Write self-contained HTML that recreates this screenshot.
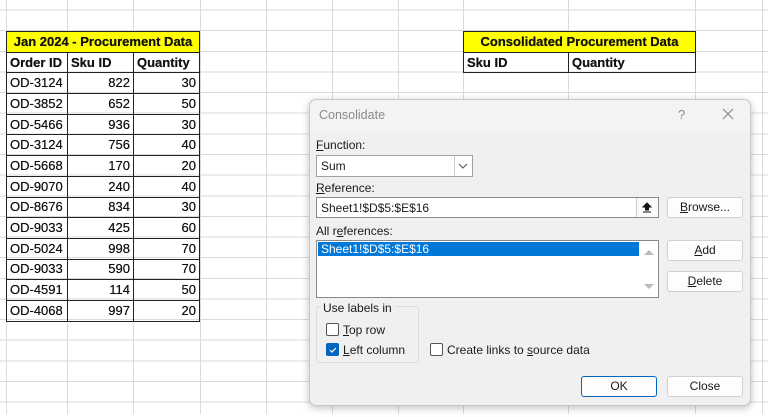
<!DOCTYPE html>
<html><head><meta charset="utf-8"><style>
*{box-sizing:border-box;margin:0;padding:0}
body{width:768px;height:417px;overflow:hidden;background:#fff;font-family:"Liberation Sans",sans-serif;position:relative}
.grid{position:absolute;left:0;top:0;width:768px;height:414px;background:repeating-linear-gradient(to bottom,transparent 0,transparent 9.6px,#dadada 9.6px,#dadada 10.6px,transparent 10.6px,transparent 20.63px)}
.v{position:absolute;top:0;height:414px;width:1px;background:#dadada}
.t{position:absolute;border-collapse:collapse;font-size:13px;color:#111;text-shadow:0 0 0.4px #000}
.t td{border:1px solid #222;height:20.7px;padding:0 3px;white-space:nowrap;line-height:18px}
.t td.r{text-align:right}
.t .h td{font-weight:bold}
.y{background:#ffff00;font-weight:bold;text-align:center}
.dlg{position:absolute;left:309px;top:99px;width:442px;height:307px;background:#f0f0f0;border:1px solid #c8c8c8;border-radius:7px;box-shadow:0 2px 8px rgba(0,0,0,.25);font-size:12px;color:#1a1a1a}
.a{position:absolute}
.u{text-decoration:underline}
.box{position:absolute;background:#fff;border:1px solid #8a8a8a}
.btn{position:absolute;width:76px;height:21px;background:#fdfdfd;border:1px solid #d0d0d0;border-radius:3px;text-align:center;line-height:19px;font-size:12px}
.cb{position:absolute;width:13px;height:13px;border:1px solid #555;border-radius:2px;background:#fff}
</style></head><body>
<div class="grid"></div>
<div class="v" style="left:6px"></div><div class="v" style="left:67px"></div><div class="v" style="left:133px"></div><div class="v" style="left:200px"></div><div class="v" style="left:266px"></div><div class="v" style="left:332px"></div><div class="v" style="left:398px"></div><div class="v" style="left:463px"></div><div class="v" style="left:568px"></div><div class="v" style="left:695px"></div><div class="v" style="left:762px"></div>

<table class="t" style="left:6px;top:31px;width:194px">
<tr><td colspan="3" class="y">Jan 2024 - Procurement Data</td></tr>
<tr class="h"><td style="width:61px">Order ID</td><td style="width:66px">Sku ID</td><td>Quantity</td></tr>
<tr><td>OD-3124</td><td class="r">822</td><td class="r">30</td></tr>
<tr><td>OD-3852</td><td class="r">652</td><td class="r">50</td></tr>
<tr><td>OD-5466</td><td class="r">936</td><td class="r">30</td></tr>
<tr><td>OD-3124</td><td class="r">756</td><td class="r">40</td></tr>
<tr><td>OD-5668</td><td class="r">170</td><td class="r">20</td></tr>
<tr><td>OD-9070</td><td class="r">240</td><td class="r">40</td></tr>
<tr><td>OD-8676</td><td class="r">834</td><td class="r">30</td></tr>
<tr><td>OD-9033</td><td class="r">425</td><td class="r">60</td></tr>
<tr><td>OD-5024</td><td class="r">998</td><td class="r">70</td></tr>
<tr><td>OD-9033</td><td class="r">590</td><td class="r">70</td></tr>
<tr><td>OD-4591</td><td class="r">114</td><td class="r">50</td></tr>
<tr><td>OD-4068</td><td class="r">997</td><td class="r">20</td></tr>
</table>

<table class="t" style="left:463px;top:31px;width:233px">
<tr><td colspan="2" class="y">Consolidated Procurement Data</td></tr>
<tr class="h"><td style="width:105px">Sku ID</td><td>Quantity</td></tr>
</table>

<div class="dlg">
<div class="a" style="left:0;top:0;width:440px;height:32px;background:#f3f3f3;border-radius:7px 7px 0 0"></div>
<div class="a" style="left:9px;top:8px;font-size:12.5px;color:#8a8a8a">Consolidate</div>
<div class="a" style="left:368px;top:7px;font-size:13px;color:#888">?</div>
<svg class="a" style="left:412px;top:8px" width="12" height="12"><path d="M1 1L11 11M11 1L1 11" stroke="#888" stroke-width="1.2"/></svg>
<div class="a" style="left:6px;top:38px"><span class="u">F</span>unction:</div>
<div class="box" style="left:6px;top:55px;width:157px;height:22px;border-color:#a0a0a0"><span style="position:absolute;left:4px;top:3px">Sum</span><div style="position:absolute;right:0;top:0;width:18px;height:20px;border-left:1px solid #ccc"></div><svg style="position:absolute;right:4px;top:7px" width="10" height="6"><path d="M1 1L5 5L9 1" stroke="#555" fill="none"/></svg></div>
<div class="a" style="left:6px;top:81px"><span class="u">R</span>eference:</div>
<div class="box" style="left:6px;top:97px;width:343px;height:21px"><span style="position:absolute;left:4px;top:3px">Sheet1!$D$5:$E$16</span><div style="position:absolute;right:0;top:0;width:22px;height:19px;border-left:1px solid #ccc;background:#fafafa"></div><svg style="position:absolute;right:6px;top:4px" width="10" height="11"><path d="M5 1L1 5H3.5V8H6.5V5H9Z M1 10H9" fill="#111" stroke="#111" stroke-width="1"/></svg></div>
<div class="btn" style="left:357px;top:97px"><span class="u">B</span>rowse...</div>
<div class="a" style="left:6px;top:124px">All r<span class="u">e</span>ferences:</div>
<div class="box" style="left:6px;top:140px;width:343px;height:58px"><div style="position:absolute;left:1px;top:1px;width:321px;height:14px;background:#0078d7;color:#fff;line-height:14px;padding-left:3px">Sheet1!$D$5:$E$16</div><svg style="position:absolute;right:4px;top:8px" width="10" height="6"><path d="M0 6L5 1L10 6Z" fill="#bbb"/></svg><svg style="position:absolute;right:4px;top:43px" width="10" height="6"><path d="M0 0L5 5L10 0Z" fill="#bbb"/></svg></div>
<div class="btn" style="left:357px;top:140px"><span class="u">A</span>dd</div>
<div class="btn" style="left:357px;top:171px"><span class="u">D</span>elete</div>
<div class="a" style="left:6px;top:206px;width:103px;height:57px;border:1px solid #dcdcdc;border-radius:3px"></div>
<div class="a" style="left:11px;top:201px;background:#f0f0f0;padding:0 2px">Use labels in</div>
<div class="cb" style="left:16px;top:223px"></div>
<div class="a" style="left:33px;top:223px"><span class="u">T</span>op row</div>
<div class="cb" style="left:16px;top:243px;background:#0067c0;border-color:#0067c0"><svg style="position:absolute;left:1px;top:1px" width="10" height="10"><path d="M2 5L4 7L8 3" stroke="#fff" fill="none" stroke-width="1.2"/></svg></div>
<div class="a" style="left:33px;top:243px"><span class="u">L</span>eft column</div>
<div class="cb" style="left:120px;top:243px"></div>
<div class="a" style="left:137px;top:243px">Create links to <span class="u">s</span>ource data</div>
<div class="btn" style="left:271px;top:276px;border:1.5px solid #0067c0">OK</div>
<div class="btn" style="left:357px;top:276px">Close</div>
</div>
</body></html>
